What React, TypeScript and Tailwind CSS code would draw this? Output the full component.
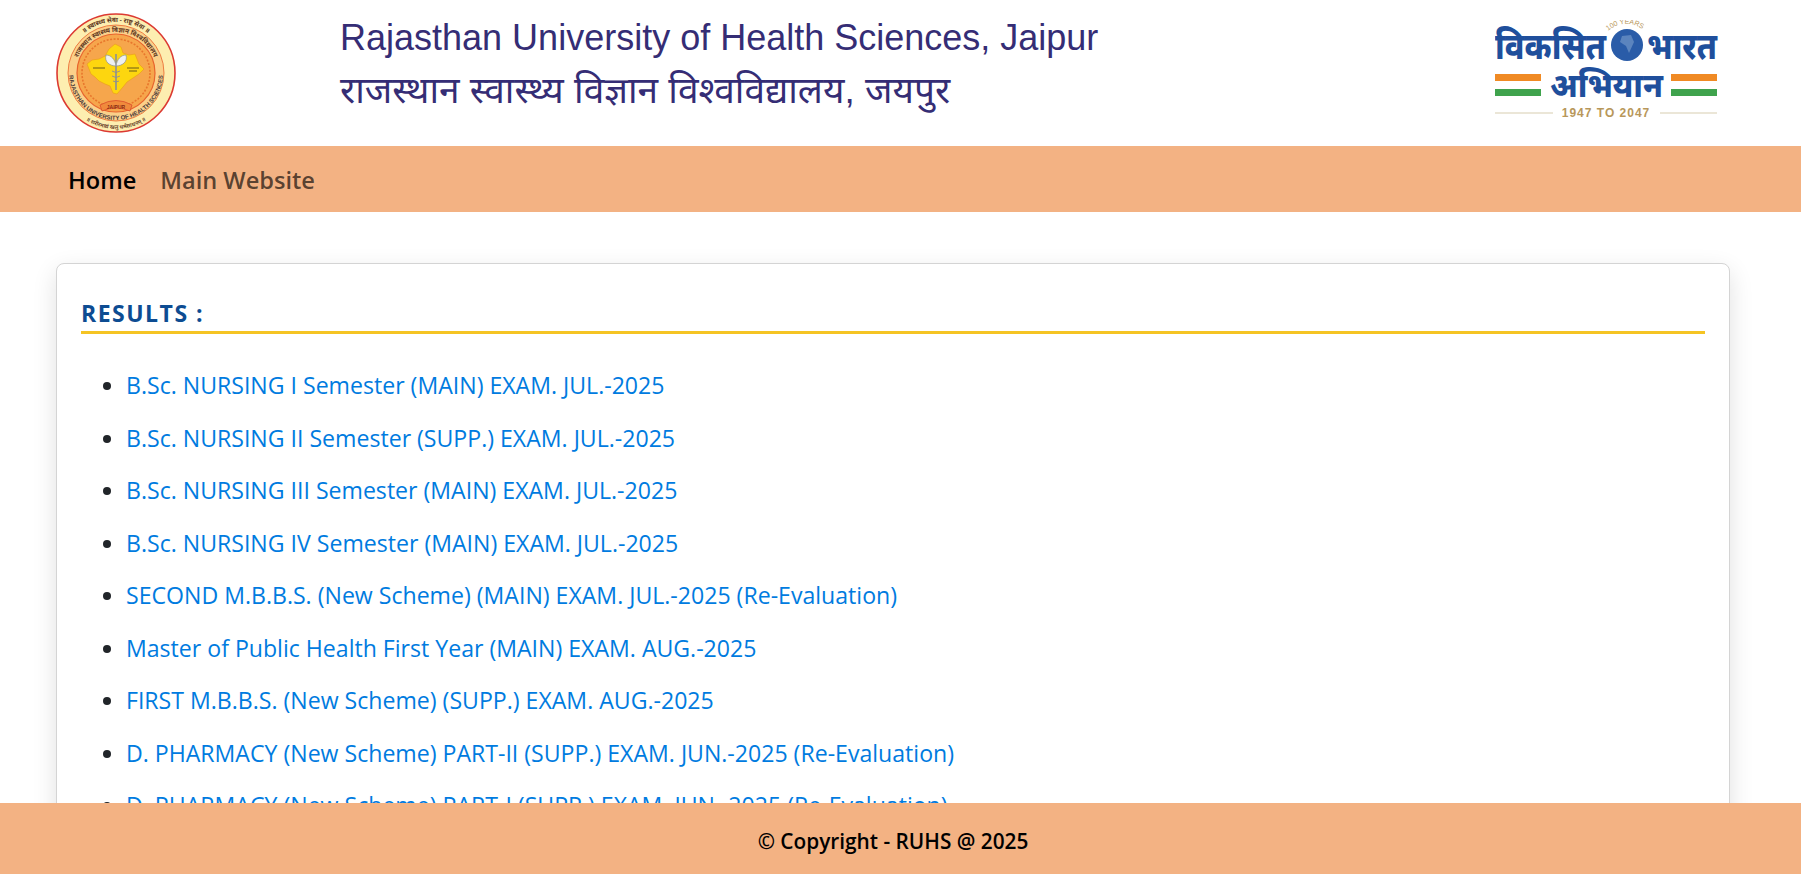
const RESULTS = [
  "B.Sc. NURSING I Semester (MAIN) EXAM. JUL.-2025",
  "B.Sc. NURSING II Semester (SUPP.) EXAM. JUL.-2025",
  "B.Sc. NURSING III Semester (MAIN) EXAM. JUL.-2025",
  "B.Sc. NURSING IV Semester (MAIN) EXAM. JUL.-2025",
  "SECOND M.B.B.S. (New Scheme) (MAIN) EXAM. JUL.-2025 (Re-Evaluation)",
  "Master of Public Health First Year (MAIN) EXAM. AUG.-2025",
  "FIRST M.B.B.S. (New Scheme) (SUPP.) EXAM. AUG.-2025",
  "D. PHARMACY (New Scheme) PART-II (SUPP.) EXAM. JUN.-2025 (Re-Evaluation)",
  "D. PHARMACY (New Scheme) PART-I (SUPP.) EXAM. JUN.-2025 (Re-Evaluation)",
];

const Seal = () => (
  <svg width="122" height="122" viewBox="0 0 122 122" className="shrink-0">
    <defs>
      <path id="sealTop" d="M 61 61 m -51 0 a 51 51 0 0 1 102 0" />
      <path id="sealMid" d="M 61 61 m -41 0 a 41 41 0 0 1 82 0" />
      <path id="sealBottom" d="M 61 61 m -47 0 a 47 47 0 0 0 94 0" />
      <path id="sealMotto" d="M 61 61 m -56 0 a 56 56 0 0 0 112 0" />
    </defs>
    <circle cx="61" cy="61" r="59" fill="#fdeeb0" stroke="#dc3a32" strokeWidth="1.6" />
    <circle cx="61" cy="61" r="48" fill="#fbd08a" stroke="#e8632c" strokeWidth="0.8" />
    <circle cx="61" cy="61" r="39" fill="#f6a64c" stroke="#e8632c" strokeWidth="1.2" />
    <circle cx="61" cy="61" r="34" fill="none" stroke="#e8762c" strokeWidth="1.6" strokeDasharray="2 1.5" />
    <path
      d="M60 32 L66 35 L68 41 L74 43 L80 42 L82 47 L84 52 L89 57 L84 62 L78 66 L72 70 L68 75 L62 82 L58 81 L55 74 L50 72 L44 69 L40 65 L36 62 L32 52 L37 48 L44 47 L50 44 L54 37 Z"
      fill="#fdd60f"
      stroke="#eb9f1e"
      strokeWidth="0.7"
    />
    <path d="M61 42 L61 78" stroke="#8a8f96" strokeWidth="1.6" />
    <path d="M61 54 C55 54 49 50 51 43 C56 43 60 47 61 54 C62 47 66 43 71 43 C73 50 67 54 61 54 Z" fill="#eef0f0" stroke="#8a8f96" strokeWidth="0.7" />
    <path d="M57 59 Q61 62 65 59 M57 64 Q61 67 65 64 M58 69 Q61 71 64 69" fill="none" stroke="#8a8f96" strokeWidth="0.9" />
    <path d="M38 56 H50 M72 56 H84 M74 59 H82" stroke="#6b5a1a" strokeWidth="1" />
    <path d="M45 93 Q61 84 77 93 L75 99 Q61 93 47 99 Z" fill="#f08a3c" stroke="#d8442a" strokeWidth="0.7" />
    <text x="61" y="96.5" textAnchor="middle" fontSize="5" fontWeight="700" fontFamily="Liberation Sans, sans-serif" fill="#8c2a14">JAIPUR</text>
    <text fontSize="6.5" fontWeight="700" fill="#5c3520" fontFamily="Noto Sans, sans-serif">
      <textPath href="#sealTop" startOffset="50%" textAnchor="middle">॥ स्वास्थ्य सेवा - राष्ट्र सेवा ॥</textPath>
    </text>
    <text fontSize="6.5" fontWeight="700" fill="#5c3520" fontFamily="Noto Sans, sans-serif">
      <textPath href="#sealMid" startOffset="50%" textAnchor="middle">राजस्थान स्वास्थ्य विज्ञान विश्वविद्यालय</textPath>
    </text>
    <text fontSize="6" fontWeight="700" fill="#4a3a3a" fontFamily="Liberation Sans, sans-serif">
      <textPath href="#sealBottom" startOffset="50%" textAnchor="middle">RAJASTHAN UNIVERSITY OF HEALTH SCIENCES</textPath>
    </text>
    <text fontSize="5.5" fontWeight="600" fill="#5c3520" fontFamily="Noto Sans, sans-serif">
      <textPath href="#sealMotto" startOffset="50%" textAnchor="middle">॥ शरीरमाद्यं खलु धर्मसाधनम् ॥</textPath>
    </text>
  </svg>
);

const BharatLogo = () => (
  <svg width="224" height="106" viewBox="0 -2 224 106" className="shrink-0">
    <defs>
      <path id="yearsArc" d="M 113 9 Q 130 -5 149 8" />
    </defs>
    <text x="0" y="37" fontSize="36" fontWeight="800" fill="#1f4f9c" fontFamily="Noto Sans, sans-serif" textLength="111" lengthAdjust="spacingAndGlyphs">विकसित</text>
    <text x="152" y="37" fontSize="36" fontWeight="800" fill="#1f4f9c" fontFamily="Noto Sans, sans-serif" textLength="70" lengthAdjust="spacingAndGlyphs">भारत</text>
    <circle cx="132" cy="23" r="16" fill="#2a5ca8" />
    <path d="M127 14 L136 13 L139 20 L134 31 L131 24 L125 20 Z" fill="#5b84be" />
    <text fontSize="7" fill="#b8975a" fontFamily="Liberation Sans, sans-serif">
      <textPath href="#yearsArc">100 YEARS</textPath>
    </text>
    <rect x="0" y="52" width="46" height="7" fill="#f08a24" />
    <rect x="176" y="52" width="46" height="7" fill="#f08a24" />
    <rect x="0" y="67" width="46" height="7" fill="#3fa34d" />
    <rect x="176" y="67" width="46" height="7" fill="#3fa34d" />
    <text x="55" y="75" fontSize="34" fontWeight="800" fill="#1f4f9c" fontFamily="Noto Sans, sans-serif" textLength="113" lengthAdjust="spacingAndGlyphs">अभियान</text>
    <rect x="0" y="90.5" width="58" height="1" fill="#d8cdb0" />
    <rect x="165" y="90.5" width="57" height="1" fill="#d8cdb0" />
    <text x="111" y="95" textAnchor="middle" fontSize="12" fontWeight="700" letterSpacing="1" fill="#b8975a" fontFamily="Liberation Sans, sans-serif">1947 TO 2047</text>
  </svg>
);

export default function App() {
  return (
    <div className="flex h-[874px] flex-col overflow-hidden bg-white font-['Open_Sans',sans-serif]">
      {/* Header */}
      <header className="flex h-[146px] shrink-0 items-center pl-[55px] pr-[82px]">
        <Seal />
        <div className="ml-[163px] flex-1 pb-[15px] font-['Liberation_Sans','Noto_Sans',sans-serif] text-[#352d75]">
          <div className="mb-[7px] text-[36px] leading-[44px]">Rajasthan University of Health Sciences, Jaipur</div>
          <div className="text-[37px] leading-[48px]">राजस्थान स्वास्थ्य विज्ञान विश्वविद्यालय, जयपुर</div>
        </div>
        <BharatLogo />
      </header>

      {/* Nav */}
      <nav className="flex h-[66px] shrink-0 items-center gap-[24px] bg-[#f3b283] pt-[4px] pl-[68px] text-[23.6px] font-semibold">
        <a className="text-black">Home</a>
        <a className="text-black/65">Main Website</a>
      </nav>

      {/* Content */}
      <main className="min-h-0 flex-1 overflow-hidden pl-[56px] pr-[71px] pt-[51px]">
        <div className="rounded-lg border border-[#d4d4d4] bg-white px-6 pt-[36px] pb-6 shadow-[0_8px_24px_rgba(0,0,0,0.12)]">
          <h2 className="border-b-[3px] border-[#f5c423] pb-[5px] text-[23px] leading-[26px] font-bold tracking-[1.5px] text-[#0d4c92]">
            RESULTS :
          </h2>
          <ul className="mt-[36px] list-disc pl-[45px] text-[23.1px] text-[#007be0] marker:text-[#212529]">
            {RESULTS.map((r) => (
              <li key={r} className="mb-[21px] leading-[31.5px]">
                <a>{r}</a>
              </li>
            ))}
          </ul>
        </div>
      </main>

      {/* Footer */}
      <footer className="z-10 flex h-[71px] shrink-0 items-center justify-center bg-[#f3b283] pt-[6px] pr-[15px] text-[20.8px] font-semibold text-black">
        © Copyright - RUHS @ 2025
      </footer>
    </div>
  );
}
